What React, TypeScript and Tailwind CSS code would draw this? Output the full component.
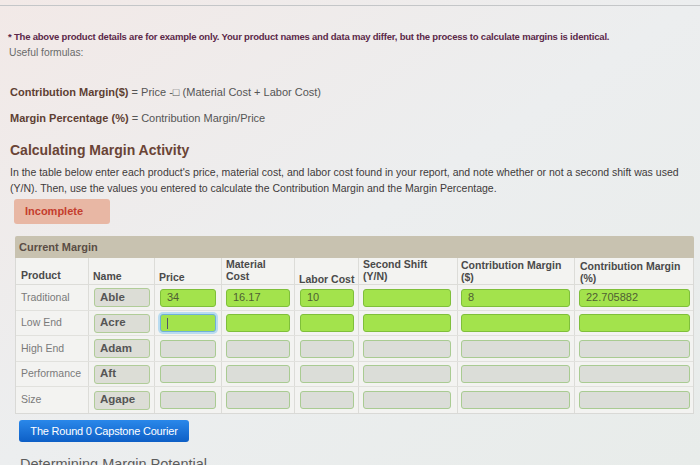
import React from "react";

const sans = '"Liberation Sans", Arial, Helvetica, sans-serif';

interface Row {
  product: string;
  name: string;
  values: string[];
  state: "filled" | "active" | "empty";
  h: string;
}

const rows: Row[] = [
  { product: "Traditional", name: "Able", values: ["34", "16.17", "10", "", "8", "22.705882"], state: "filled", h: "h-[26px]" },
  { product: "Low End", name: "Acre", values: ["", "", "", "", "", ""], state: "active", h: "h-[25px]" },
  { product: "High End", name: "Adam", values: ["", "", "", "", "", ""], state: "empty", h: "h-[26px]" },
  { product: "Performance", name: "Aft", values: ["", "", "", "", "", ""], state: "empty", h: "h-[25px]" },
  { product: "Size", name: "Agape", values: ["", "", "", "", "", ""], state: "empty", h: "h-[26px]" },
];

const cols = "grid-cols-[73px_66px_67px_73px_64px_99px_117px_120px]";

// padding of the input inside each value column
const cellPad = ["pl-[5px] pr-[5px]", "pl-[4px] pr-[4px]", "pl-[5px] pr-[4px]", "pl-[4px] pr-[6px]", "pl-[3px] pr-[4px]", "pl-[4px] pr-[5px]"];

function Field({ value, green, focus }: { value: string; green: boolean; focus?: boolean }) {
  let cls = "w-full h-[18px] rounded-[3px] border px-[6px] flex items-center text-[11px] ";
  if (focus) cls += "bg-[#a3e34c] border-[#6fb0d8] ring-2 ring-[#b9dcf0]";
  else if (green) cls += "bg-[#a3e34c] border-[#7fbf3a] text-[#4f5f33]";
  else cls += "bg-[#dbddd8] border-[#a9cb92] text-[#555]";
  return <div className={cls}>{focus ? <span className="w-px h-[11px] bg-[#556]" /> : value}</div>;
}

export default function App() {
  return (
    <div
      className="w-[700px] h-[465px] overflow-hidden bg-gradient-to-br from-[#f2e9e7] via-[#eceeef] to-[#e8ecea] text-[#444]"
      style={{ fontFamily: sans }}
    >
      <div className="mt-[5px] border-t border-[#c4c6c8]" />

      {/* note */}
      <p className="pl-[8px] mt-[24px] text-[9.5px] font-bold tracking-[-0.2px] text-[#5b2848] leading-[14px] whitespace-nowrap">
        * The above product details are for example only. Your product names and data may differ, but the process to calculate margins is identical.
      </p>

      <p className="pl-[9px] mt-[2px] text-[10.3px] text-[#6a6a6a] leading-[14px]">Useful formulas:</p>

      <p className="pl-[10px] mt-[25px] text-[11px] text-[#555] leading-[14px]">
        <span className="font-bold text-[#5e3f33]">Contribution Margin($)</span> = Price -□ (Material Cost + Labor Cost)
      </p>

      <p className="pl-[10px] mt-[12px] text-[11px] text-[#555] leading-[14px]">
        <span className="font-bold text-[#5e3f33]">Margin Percentage (%)</span> = Contribution Margin/Price
      </p>

      {/* activity */}
      <h2 className="pl-[10px] mt-[16px] text-[14px] font-bold text-[#6a4436] leading-[18px]">
        Calculating Margin Activity
      </h2>
      <p className="pl-[10px] pr-[10px] mt-[5px] text-[10.5px] text-[#3e3a3a] leading-[16px]">
        In the table below enter each product's price, material cost, and labor cost found in your report, and note whether or not a second shift was used (Y/N). Then, use the values you entered to calculate the Contribution Margin and the Margin Percentage.
      </p>
      <div className="ml-[14px] mt-[3px] w-[96px] h-[25px] rounded-[3px] bg-[#e8b7a4] flex items-center pl-[11px] text-[11px] font-bold text-[#c43d2d]">
        Incomplete
      </div>

      {/* table */}
      <div className="ml-[15px] mt-[12px] w-[679px]">
        <div className="h-[22px] bg-[#c8c2b0] rounded-t-[2px] flex items-center pl-[4px] text-[11px] font-bold text-[#5a4d45]">
          Current Margin
        </div>
        <div className="bg-[#f3f3f1] border-x border-b border-[#d9d9d6]">
          <div className={"grid " + cols + " h-[27px] border-b border-[#dcdcd8] text-[10.5px] font-bold text-[#4a4a4a] leading-[12px]"}>
            <div className="flex items-end pb-[4px] pl-[5px] border-r border-[#dcdcd8]">Product</div>
            <div className="flex items-end pb-[3px] pl-[4px] border-r border-[#dcdcd8]">Name</div>
            <div className="flex items-end pb-[2px] pl-[4px] border-r border-[#dcdcd8]">Price</div>
            <div className="flex items-end pb-[3px] pl-[4px] border-r border-[#dcdcd8]">Material<br />Cost</div>
            <div className="flex items-end pb-[0px] pl-[4px] border-r border-[#dcdcd8]">Labor Cost</div>
            <div className="flex items-end pb-[3px] pl-[4px] border-r border-[#dcdcd8]">Second Shift<br />(Y/N)</div>
            <div className="flex items-end pb-[2px] pl-[3px] border-r border-[#dcdcd8]">Contribution Margin<br />($)</div>
            <div className="flex items-end pb-[1px] pl-[5px]">Contribution Margin<br />(%)</div>
          </div>
          {rows.map((r) => (
            <div key={r.product} className={"grid " + cols + " " + r.h + " border-b border-[#e1e1dd] last:border-b-0"}>
              <div className="flex items-center pl-[5px] text-[10.5px] text-[#7a7a7a] border-r border-[#dcdcd8]">{r.product}</div>
              <div className="flex items-center pl-[5px] pr-[4px] border-r border-[#dcdcd8]">
                <div className="w-full h-[19px] rounded-[3px] border border-[#b0cc98] bg-[#dcddd6] flex items-center px-[5px] text-[11.5px] font-bold text-[#555]">
                  {r.name}
                </div>
              </div>
              {r.values.map((v, i) => (
                <div
                  key={i}
                  className={"flex items-center " + cellPad[i] + (i < 5 ? " border-r border-[#dcdcd8]" : "")}
                >
                  <Field value={v} green={r.state !== "empty"} focus={r.state === "active" && i === 0} />
                </div>
              ))}
            </div>
          ))}
        </div>
      </div>

      <button className="ml-[19px] mt-[6px] w-[170px] h-[22px] rounded-[3px] bg-gradient-to-b from-[#2a88ea] to-[#0d5fc6] text-white text-[11px] tracking-[-0.2px] flex items-center justify-center">
        The Round 0 Capstone Courier
      </button>

      <h2 className="pl-[20px] mt-[13px] text-[14.5px] text-[#5c5c5c] leading-[18px]">
        Determining Margin Potential
      </h2>
    </div>
  );
}
